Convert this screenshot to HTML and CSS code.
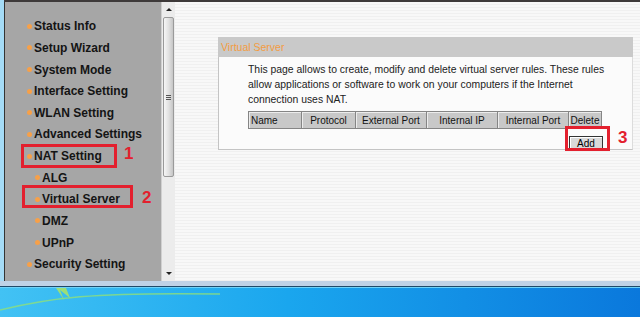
FILE: index.html
```html
<!DOCTYPE html>
<html lang="en">
<head>
    <meta charset="UTF-8">
    <title>Virtual Server</title>
    <link rel="stylesheet" href="styles.css">
</head>
<body>
    <div class="window">
        <div class="titlebar"></div>
        <div class="frame">
            <nav class="menu">
                <a class="item">Status Info</a>
                <a class="item">Setup Wizard</a>
                <a class="item">System Mode</a>
                <a class="item">Interface Setting</a>
                <a class="item">WLAN Setting</a>
                <a class="item">Advanced Settings</a>
                <a class="item">NAT Setting</a>
                <a class="item sub">ALG</a>
                <a class="item sub">Virtual Server</a>
                <a class="item sub">DMZ</a>
                <a class="item sub">UPnP</a>
                <a class="item">Security Setting</a>

                <!-- annotations -->
                <span class="mark mark-nat"></span>
                <span class="step step-1">1</span>
                <span class="mark mark-vs"></span>
                <span class="step step-2">2</span>
            </nav>
            <div class="scrollbar">
                <div class="arrow"><span class="tri up"></span></div>
                <div class="thumb"><span class="grip"></span></div>
                <div class="track"></div>
                <div class="arrow"><span class="tri down"></span></div>
            </div>
            <main class="content">
                <div class="panel">
                    <div class="panel-title">Virtual Server</div>
                    <div class="panel-body">
                        <p class="intro">This page allows to create, modify and delete virtual server rules. These rules allow applications or software to work on your computers if the Internet<br>connection uses NAT.</p>
                        <table class="rules">
                            <tr>
                                <th class="c-name">Name</th>
                                <th class="c-proto">Protocol</th>
                                <th class="c-port">External Port</th>
                                <th class="c-port">Internal IP</th>
                                <th class="c-port">Internal Port</th>
                                <th class="c-del">Delete</th>
                            </tr>
                        </table>
                        <div class="actions"><button class="btn">Add</button></div>

                        <span class="mark mark-add"></span>
                        <span class="step step-3">3</span>
                    </div>
                </div>
            </main>
        </div>
        <div class="sill"></div>
    </div>
    <div class="desktop">
        <svg class="swoosh" width="220" height="30" viewBox="0 0 220 30">
            <path d="M0 22 C50 10 90 4 220 6" stroke="#8fe07a" stroke-width="1.5" fill="none" opacity="0.8"/>
            <path d="M56 0 L64 12 L60 2 L70 10 L66 0 Z" fill="#a6e26a" opacity="0.9"/>
        </svg>
    </div>
</body>
</html>
```

FILE: styles.css
```css
body {
    margin: 0;
    width: 640px;
    height: 317px;
    overflow: hidden;
    font-family: "Liberation Sans", Arial, sans-serif;
    background: linear-gradient(90deg, #42c2f4 0, #1aa6ee 45%, #0a78dc 100%);
}
.window {
    border-left: 4px solid #a4dbf6;
    display: flex;
    flex-direction: column;
}
.titlebar {
    height: 2px;
    background: #3e3a3a;
}
.frame {
    display: flex;
    height: 279px;
}
.menu {
    position: relative;
    width: 157px;
    background: #a6a6a6;
    border-left: 1px solid #333;
    padding-top: 13.5px;
    box-sizing: border-box;
}
.item {
    display: flex;
    align-items: center;
    gap: 2px;
    height: 21.64px;
    padding-left: 22px;
    font-size: 12px;
    font-weight: bold;
    color: #141414;
}
.item::before {
    content: "";
    width: 5px;
    height: 5px;
    border-radius: 50%;
    background: #f7a048;
}
.item.sub {
    padding-left: 30px;
}
.mark {
    position: absolute;
    box-sizing: border-box;
    border: 3px solid #e3202e;
}
.step {
    position: absolute;
    font-size: 17px;
    font-weight: bold;
    line-height: 20px;
    color: #e3202e;
}
.mark-nat {
    left: 16px;
    top: 142px;
    width: 96px;
    height: 24px;
}
.step-1 {
    left: 119px;
    top: 142px;
}
.mark-vs {
    left: 17px;
    top: 183px;
    width: 111px;
    height: 23px;
}
.step-2 {
    left: 137px;
    top: 186px;
}
.scrollbar {
    width: 14px;
    display: flex;
    flex-direction: column;
    background: #ececec;
    border-left: 1px solid #d0d0d0;
    box-sizing: border-box;
}
.arrow {
    height: 15px;
    display: flex;
    align-items: center;
    justify-content: center;
}
.tri {
    width: 0;
    height: 0;
    border-left: 3px solid transparent;
    border-right: 3px solid transparent;
}
.tri.up {
    border-bottom: 3px solid #222;
}
.tri.down {
    border-top: 3px solid #222;
}
.thumb {
    height: 160px;
    margin: 0 1px;
    border: 1px solid #9a9a9a;
    border-radius: 2px;
    background: linear-gradient(90deg, #f6f6f6, #e2e2e2 50%, #c6c6c6);
    display: flex;
    align-items: center;
    justify-content: center;
    box-sizing: border-box;
}
.grip {
    width: 5px;
    height: 5px;
    background: repeating-linear-gradient(#555 0 1px, transparent 1px 2px);
}
.track {
    flex: 1;
}
.content {
    flex: 1;
    background: repeating-linear-gradient(#f8f8f8 0 2px, #f0f0f0 2px 3px);
}
.panel {
    width: 415px;
    margin: 35px 0 0 43px;
}
.panel-title {
    height: 20px;
    line-height: 20px;
    padding-left: 3px;
    background: #c9c9c9;
    color: #f39c42;
    font-size: 10.5px;
}
.panel-body {
    position: relative;
    background: #fbfbfb;
    border-left: 1px solid #c4c4c4;
    border-right: 1px solid #dcdcdc;
    border-bottom: 1px solid #c4c4c4;
    padding: 5px 0 4px 29px;
    height: 93px;
    box-sizing: border-box;
}
.intro {
    margin: 0;
    width: 370px;
    font-size: 10.4px;
    line-height: 15px;
    color: #222;
}
.rules {
    margin-top: 4px;
    width: 354px;
    border-collapse: collapse;
    table-layout: fixed;
}
.rules th {
    height: 16px;
    padding: 0;
    font-size: 10px;
    font-weight: normal;
    color: #111;
    background: #c8c8c8;
    border: 1px solid #858585;
    box-shadow: inset 1px 1px #ececec;
}
.rules .c-name {
    width: 50px;
    padding-left: 2px;
    text-align: left;
}
.rules .c-proto {
    width: 53px;
}
.rules .c-port {
    width: 70px;
}
.actions {
    width: 355px;
    margin-top: 4px;
    text-align: right;
}
.btn {
    width: 34px;
    height: 15px;
    padding: 0;
    font-family: "Liberation Sans", Arial, sans-serif;
    font-size: 10px;
    background: #d9d9d9;
    border: 1px solid #333;
    box-shadow: inset 1px 1px #fff;
}
.mark-add {
    left: 346px;
    top: 69px;
    width: 45px;
    height: 25px;
}
.step-3 {
    left: 399px;
    top: 71px;
}
.sill {
    height: 5px;
    background: #bfd2e6;
    border-bottom: 1px solid #1f4a6a;
    margin-left: -4px;
}
.desktop {
    height: 30px;
    border-top: 1px solid #6fd2f8;
}
.swoosh {
    display: block;
}
```
